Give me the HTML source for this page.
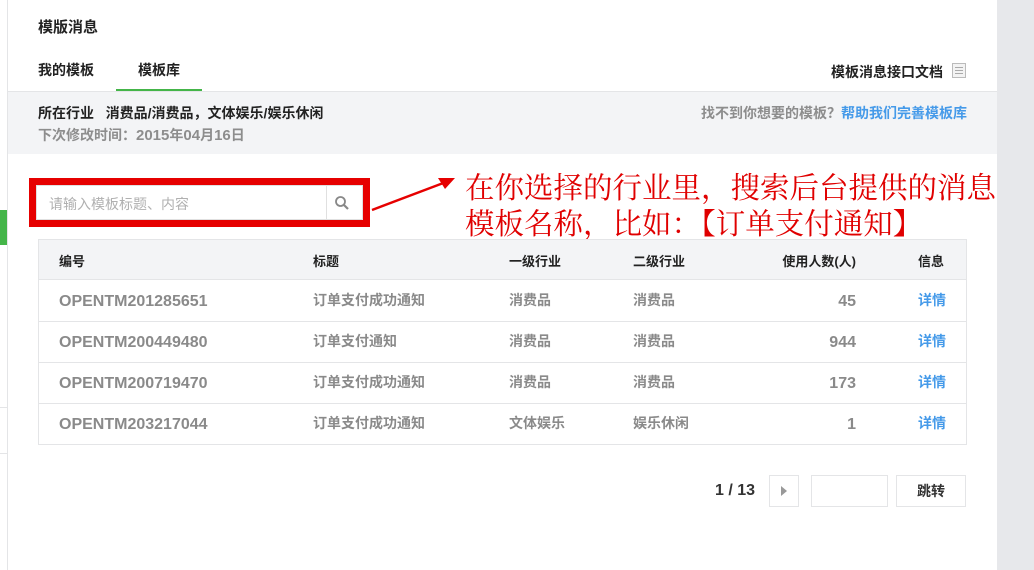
<!DOCTYPE html>
<html><head><meta charset="utf-8"><style>
*{margin:0;padding:0;box-sizing:border-box}
body{width:1034px;height:570px;overflow:hidden;background:#fff;font-family:"Liberation Sans","Noto Sans CJK SC",sans-serif;position:relative;font-size:14px;color:#222}
.abs{position:absolute}
.b{font-weight:bold}
.n{font-size:16px;line-height:18px;margin-top:2px}
.c{font-size:14px;line-height:18px}
</style></head><body>
<div class="abs" style="left:7px;top:0;width:1px;height:570px;background:#e4e5e7"></div>
<div class="abs" style="left:0;top:210px;width:7px;height:35px;background:#44b549"></div>
<div class="abs" style="left:0;top:407px;width:7px;height:1px;background:#e4e5e7"></div>
<div class="abs" style="left:0;top:453px;width:7px;height:1px;background:#e4e5e7"></div>
<div class="abs" style="left:997px;top:0;width:37px;height:570px;background:#e7e8eb"></div>

<div class="abs b" style="left:38px;top:16px;font-size:15px">模版消息</div>
<div class="abs b" style="left:38px;top:60px;font-size:14px">我的模板</div>
<div class="abs b" style="left:138px;top:60px;font-size:14px">模板库</div>
<div class="abs" style="left:116px;top:89px;width:86px;height:3px;background:#44b549"></div>
<div class="abs" style="left:8px;top:91px;width:989px;height:1px;background:#e4e5e7"></div>
<div class="abs b" style="left:831px;top:62px;font-size:14px">模板消息接口文档</div>
<div class="abs" style="left:952px;top:63px;width:14px;height:15px;border:1px solid #bbb;background:#f3f3f3"><div style="margin:3px 2px;height:1px;background:#aaa;box-shadow:0 3px #aaa,0 6px #aaa"></div></div>

<div class="abs" style="left:8px;top:92px;width:989px;height:62px;background:#f3f4f6"></div>
<div class="abs b" style="left:38px;top:103px;font-size:14px">所在行业&nbsp;&nbsp;&nbsp;消费品/消费品，文体娱乐/娱乐休闲</div>
<div class="abs b" style="left:38px;top:125px;font-size:14px;color:#8d8d8d">下次修改时间：<span style="font-size:15px">2015</span>年<span style="font-size:15px">04</span>月<span style="font-size:15px">16</span>日</div>
<div class="abs b" style="left:701px;top:103px;font-size:14px;color:#8d8d8d">找不到你想要的模板？<span style="color:#459ae9">帮助我们完善模板库</span></div>

<div class="abs" style="left:29px;top:178px;width:341px;height:49px;border:7px solid #e60000"></div>
<div class="abs" style="left:36px;top:185px;width:327px;height:35px;border:1px solid #e0e0e0;background:#fff"></div>
<div class="abs" style="left:326px;top:186px;width:1px;height:33px;background:#e0e0e0"></div>
<div class="abs" style="left:49px;top:194px;font-size:14px;color:#b0b0b0">请输入模板标题、内容</div>
<svg class="abs" style="left:334px;top:195px" width="16" height="16" viewBox="0 0 16 16"><circle cx="6.5" cy="6.5" r="4.5" fill="none" stroke="#888" stroke-width="1.8"/><path d="M10 10l4 4" stroke="#888" stroke-width="2.2"/></svg>
<svg class="abs" style="left:368px;top:170px" width="95" height="45"><path d="M4 40 L78 12" stroke="#e60000" stroke-width="2.5"/><path d="M87 8 L70 8 L77 19 Z" fill="#e60000"/></svg>
<div class="abs" style="left:465px;top:168px;font-family:'Noto Serif CJK SC','Liberation Serif',serif;font-size:29.5px;line-height:36px;color:#e00000;white-space:nowrap">在你选择的行业里，搜索后台提供的消息<br>模板名称，比如：【订单支付通知】</div>

<div class="abs" style="left:38px;top:239px;width:929px;height:206px;border:1px solid #e4e5e7"></div>
<div class="abs" style="left:39px;top:240px;width:927px;height:40px;background:#f3f4f6;border-bottom:1px solid #e4e5e7"></div>
<div class="abs" style="left:39px;top:321px;width:927px;height:1px;background:#e4e5e7"></div>
<div class="abs" style="left:39px;top:362px;width:927px;height:1px;background:#e4e5e7"></div>
<div class="abs" style="left:39px;top:403px;width:927px;height:1px;background:#e4e5e7"></div>
<div class="abs b" style="left:59px;top:251px;font-size:13px">编号</div>
<div class="abs b" style="left:313px;top:251px;font-size:13px">标题</div>
<div class="abs b" style="left:509px;top:251px;font-size:13px">一级行业</div>
<div class="abs b" style="left:633px;top:251px;font-size:13px">二级行业</div>
<div class="abs b" style="left:756px;top:251px;width:100px;text-align:right;font-size:13px">使用人数(人)</div>
<div class="abs b" style="left:918px;top:251px;font-size:13px">信息</div>

<div style="color:#8a8a8a;font-weight:bold">
<div class="abs n" style="left:59px;top:291px">OPENTM201285651</div>
<div class="abs c" style="left:313px;top:291px">订单支付成功通知</div>
<div class="abs c" style="left:509px;top:291px">消费品</div>
<div class="abs c" style="left:633px;top:291px">消费品</div>
<div class="abs n" style="left:756px;top:291px;width:100px;text-align:right">45</div>
<div class="abs n" style="left:59px;top:332px">OPENTM200449480</div>
<div class="abs c" style="left:313px;top:332px">订单支付通知</div>
<div class="abs c" style="left:509px;top:332px">消费品</div>
<div class="abs c" style="left:633px;top:332px">消费品</div>
<div class="abs n" style="left:756px;top:332px;width:100px;text-align:right">944</div>
<div class="abs n" style="left:59px;top:373px">OPENTM200719470</div>
<div class="abs c" style="left:313px;top:373px">订单支付成功通知</div>
<div class="abs c" style="left:509px;top:373px">消费品</div>
<div class="abs c" style="left:633px;top:373px">消费品</div>
<div class="abs n" style="left:756px;top:373px;width:100px;text-align:right">173</div>
<div class="abs n" style="left:59px;top:414px">OPENTM203217044</div>
<div class="abs c" style="left:313px;top:414px">订单支付成功通知</div>
<div class="abs c" style="left:509px;top:414px">文体娱乐</div>
<div class="abs c" style="left:633px;top:414px">娱乐休闲</div>
<div class="abs n" style="left:756px;top:414px;width:100px;text-align:right">1</div>
</div>
<div style="color:#459ae9;font-weight:bold">
<div class="abs c" style="left:918px;top:291px">详情</div>
<div class="abs c" style="left:918px;top:332px">详情</div>
<div class="abs c" style="left:918px;top:373px">详情</div>
<div class="abs c" style="left:918px;top:414px">详情</div>
</div>

<div class="abs b" style="left:715px;top:482px;font-size:16px;line-height:18px;color:#333">1 / 13</div>
<div class="abs" style="left:769px;top:475px;width:30px;height:32px;border:1px solid #e4e5e7"></div>
<div class="abs" style="left:781px;top:486px;width:0;height:0;border-left:6px solid #999;border-top:5px solid transparent;border-bottom:5px solid transparent"></div>
<div class="abs" style="left:811px;top:475px;width:77px;height:32px;border:1px solid #e4e5e7"></div>
<div class="abs b" style="left:896px;top:475px;width:70px;height:32px;border:1px solid #e4e5e7;text-align:center;line-height:30px;font-size:14px;color:#333">跳转</div>
</body></html>
